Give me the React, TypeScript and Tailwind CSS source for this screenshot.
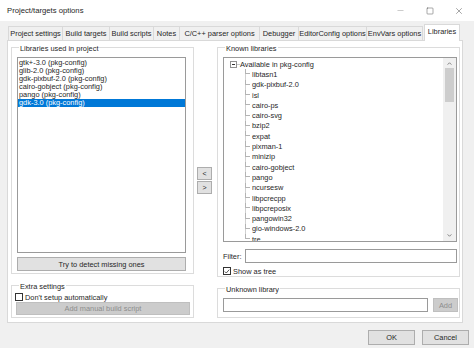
import { Minus, Square, X } from "lucide-react"

const usedLibs = [
  "gtk+-3.0 (pkg-config)",
  "glib-2.0 (pkg-config)",
  "gdk-pixbuf-2.0 (pkg-config)",
  "cairo-gobject (pkg-config)",
  "pango (pkg-config)",
  "gdk-3.0 (pkg-config)",
]

const knownLibs = [
  "libtasn1",
  "gdk-pixbuf-2.0",
  "isl",
  "cairo-ps",
  "cairo-svg",
  "bzip2",
  "expat",
  "pixman-1",
  "minizip",
  "cairo-gobject",
  "pango",
  "ncursesw",
  "libpcrecpp",
  "libpcreposix",
  "pangowin32",
  "gio-windows-2.0",
  "tre",
]

const tabs = [
  { label: "Project settings", w: "w-[55px]" },
  { label: "Build targets", w: "w-[48px]" },
  { label: "Build scripts", w: "w-[45px]" },
  { label: "Notes", w: "w-[27px]" },
  { label: "C/C++ parser options", w: "w-[81px]" },
  { label: "Debugger", w: "w-[40px]" },
  { label: "EditorConfig options", w: "w-[69px]" },
  { label: "EnvVars options", w: "w-[57px]" },
]

function GroupBox({ label, className, children }: { label: string; className: string; children: React.ReactNode }) {
  return (
    <div className={`relative border border-[#dcdcdc] ${className}`}>
      <span className="absolute left-[7px] top-0 -translate-y-1/2 bg-white px-px leading-[9px]">{label}</span>
      {children}
    </div>
  )
}

function Checkbox({ checked }: { checked?: boolean }) {
  return (
    <span className="flex size-[8px] shrink-0 items-center justify-center border border-[#333] bg-white">
      {checked && (
        <svg viewBox="0 0 8 8" className="size-[7px]" fill="none" stroke="#222" strokeWidth="1">
          <path d="M1 4 L3 6 L7 1.5" />
        </svg>
      )}
    </span>
  )
}

function Button({ children, className, disabled }: { children: React.ReactNode; className: string; disabled?: boolean }) {
  return (
    <div
      className={`flex items-center justify-center border ${
        disabled ? "border-[#bfbfbf] bg-[#cccccc] text-[#8d8d8d]" : "border-[#adadad] bg-[#e1e1e1]"
      } ${className}`}
    >
      {children}
    </div>
  )
}

export default function App() {
  return (
    <div className="flex h-[348px] w-[474px] flex-col overflow-hidden bg-[#f0f0f0] font-['Liberation_Sans',Arial,sans-serif] text-[7.4px] leading-[9px] text-[#262626]">
      {/* title bar */}
      <div className="flex h-[21px] shrink-0 items-center bg-white pl-[7px]">
        <span className="text-[7.7px]">Project/targets options</span>
        <div className="ml-auto flex h-full pr-[1px]">
          <span className="flex w-[29px] items-center justify-center text-[#777]">
            <Minus className="size-[9px]" strokeWidth={1} />
          </span>
          <span className="flex w-[29px] items-center justify-center">
            <Square className="size-[8px]" strokeWidth={1.2} />
          </span>
          <span className="flex w-[29px] items-center justify-center">
            <X className="size-[10px]" strokeWidth={1} />
          </span>
        </div>
      </div>

      {/* tabs */}
      <div className="mt-[3px] flex h-[16px] shrink-0 items-end pl-[8px]">
        {tabs.map((t, i) => (
          <div
            key={t.label}
            className={`flex h-[14px] items-center justify-center border-x border-t border-[#d9d9d9] ${t.w} ${i > 0 ? "-ml-px" : ""}`}
          >
            {t.label}
          </div>
        ))}
        <div className="relative z-10 -mb-px ml-px flex h-[17px] w-[36px] justify-center border-x border-t border-[#d9d9d9] bg-white pt-[2px]">
          Libraries
        </div>
      </div>

      {/* page */}
      <div className="ml-[7px] flex h-[283px] w-[456px] shrink-0 border border-[#d9d9d9] bg-white pl-[3px] pt-[6px]">
        {/* left column */}
        <div className="flex w-[183px] flex-col">
          <GroupBox label="Libraries used in project" className="h-[227px] pl-[5px] pt-[9px]">
            <div className="h-[196px] w-[169px] border border-[#9a9a9a] pt-[1px]">
              {usedLibs.map((l, i) => (
                <div
                  key={l}
                  className={`flex h-[8px] items-center pl-px leading-[8px] ${i === 5 ? "bg-[#0078d7] text-white" : ""}`}
                >
                  {l}
                </div>
              ))}
            </div>
            <Button className="mt-[4px] h-[14px] w-[169px]">Try to detect missing ones</Button>
          </GroupBox>
          <GroupBox label="Extra settings" className="mt-[11px] h-[33px] pl-[3px] pt-[7px]">
            <div className="flex h-[8px] items-center gap-[2px]">
              <Checkbox />
              <span>Don't setup automatically</span>
            </div>
            <Button disabled className="ml-px mt-px h-[13px] w-[174px]">
              Add manual build script
            </Button>
          </GroupBox>
        </div>

        {/* move buttons */}
        <div className="flex w-[23px] flex-col pl-[3px] pt-[120px]">
          <Button className="h-[13px] w-[15px] text-[7px]">&lt;</Button>
          <Button className="mt-px h-[13px] w-[15px] text-[7px]">&gt;</Button>
        </div>

        {/* right column */}
        <div className="flex w-[243px] flex-col">
          <GroupBox label="Known libraries" className="h-[230px] pl-[5px] pt-[9px]">
            <div className="flex h-[185px] w-[234px] border border-[#9a9a9a]">
              <div className="flex-1 overflow-hidden pt-[1px]">
                <div className="flex h-[10.3px] items-center">
                  <span className="ml-[6px] flex size-[7px] items-center justify-center border border-[#919191]">
                    <span className="h-px w-[3px] bg-[#333]" />
                  </span>
                  <span className="h-px w-[3px] bg-[#c8c8c8]" />
                  <span>Available in pkg-config</span>
                </div>
                {knownLibs.map((l, i) => (
                  <div key={l} className="flex h-[10.3px] items-center">
                    <span className="ml-[21px] flex h-full w-[5px] flex-col">
                      <span className="h-1/2 border-b border-l border-[#b4b4b4]" />
                      <span className={`h-1/2 ${i < knownLibs.length - 1 ? "border-l border-[#d0d0d0]" : ""}`} />
                    </span>
                    <span className="ml-[2px]">{l}</span>
                  </div>
                ))}
              </div>
              <div className="flex w-[13px] flex-col bg-[#f0f0f0]">
                <span className="flex h-[10px] items-center justify-center">
                  <svg viewBox="0 0 6 4" className="h-[3px] w-[5px]" fill="none" stroke="#606060" strokeWidth="1">
                    <path d="M0.5 3.5 L3 1 L5.5 3.5" />
                  </svg>
                </span>
                <div className="flex-1 px-[2px]">
                  <div className="h-[34px] bg-[#cdcdcd]" />
                </div>
                <span className="flex h-[11px] items-center justify-center">
                  <svg viewBox="0 0 6 4" className="h-[3px] w-[5px]" fill="none" stroke="#606060" strokeWidth="1">
                    <path d="M0.5 0.5 L3 3 L5.5 0.5" />
                  </svg>
                </span>
              </div>
            </div>
            <div className="mt-[7px] flex h-[14px] items-center">
              <span className="w-[22px]">Filter:</span>
              <div className="h-[14px] w-[212px] border border-[#9a9a9a]" />
            </div>
            <div className="mt-[4px] flex h-[8px] items-center gap-[2px]">
              <Checkbox checked />
              <span>Show as tree</span>
            </div>
          </GroupBox>
          <GroupBox label="Unknown library" className="mt-[11px] flex h-[30px] gap-[5px] pl-[5px] pt-[9px]">
            <div className="h-[14px] w-[205px] border border-[#9a9a9a]" />
            <Button disabled className="h-[14px] w-[25px]">
              Add
            </Button>
          </GroupBox>
        </div>
      </div>

      {/* dialog buttons */}
      <div className="mt-[7px] flex justify-end gap-[7px] pr-[5px]">
        <Button className="h-[15px] w-[47px]">OK</Button>
        <Button className="h-[15px] w-[47px]">Cancel</Button>
      </div>
    </div>
  )
}
